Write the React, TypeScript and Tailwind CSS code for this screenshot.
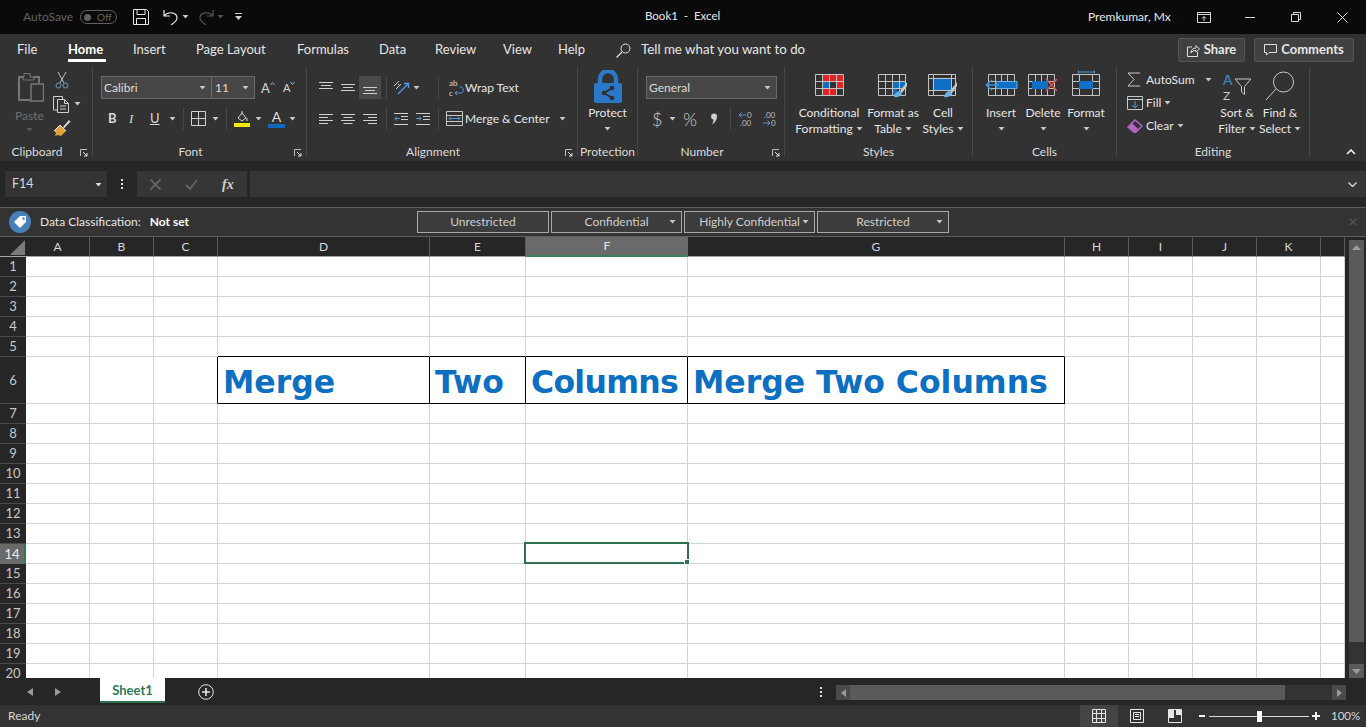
import type { ReactNode } from 'react';

const COLS = ['A', 'B', 'C', 'D', 'E', 'F', 'G', 'H', 'I', 'J', 'K', ''];
const ROWS = Array.from({ length: 20 }, (_, i) => i + 1);

const TABS = [
  { label: 'File', w: 'w-[51px]' },
  { label: 'Home', w: 'w-[65px]', active: true },
  { label: 'Insert', w: 'w-[63px]' },
  { label: 'Page Layout', w: 'w-[101px]' },
  { label: 'Formulas', w: 'w-[82px]' },
  { label: 'Data', w: 'w-[56px]' },
  { label: 'Review', w: 'w-[68px]' },
  { label: 'View', w: 'w-[55px]' },
  { label: 'Help', w: 'w-[58px]' },
];

function Caret({ className = 'text-[#c8c8c8]' }: { className?: string }) {
  return (
    <svg width="7" height="4" viewBox="0 0 7 4" className={className}>
      <polygon points="0.5,0 6.5,0 3.5,3.500" fill="currentColor" />
    </svg>
  );
}

function Launcher() {
  return (
    <svg width="8" height="8" viewBox="0 0 8 8" fill="none">
      <path d="M0.5 7V0.5H7" stroke="#bdbdbd" />
      <path d="M3 3l4 4M7 4v3H4" stroke="#e0e0e0" />
    </svg>
  );
}

function Group({ w, label, launcher, children }: { w: string; label: string; launcher?: boolean; children: ReactNode }) {
  return (
    <div className={`flex h-full shrink-0 ${w}`}>
      <div className="flex min-w-0 flex-1 flex-col">
        <div className="min-h-0 flex-1">{children}</div>
        <div className="flex h-[18px] items-start">
          <span className="flex-1 text-center text-[12px] leading-[18px] text-[#dcdcdc]">{label}</span>
          {launcher && (
            <span className="flex w-[18px] pt-[6px] pl-[6px]">
              <Launcher />
            </span>
          )}
        </div>
      </div>
      <div className="my-[5px] w-px bg-[#474747]" />
    </div>
  );
}

function BigButton({ w, icon, lines, caretLine }: { w: string; icon: ReactNode; lines: string[]; caretLine?: boolean }) {
  return (
    <div className={`flex shrink-0 flex-col items-center ${w}`}>
      <div className="flex h-[43px] items-start justify-center pt-[12px]">{icon}</div>
      {lines.map((l, i) => (
        <div key={l} className="flex h-[16px] items-center gap-[3px] text-[12px] leading-4 whitespace-nowrap text-[#e6e6e6]">
          {l}
          {caretLine && i === lines.length - 1 && <Caret />}
        </div>
      ))}
      {!caretLine && (
        <div className="flex h-[16px] items-center">
          <Caret />
        </div>
      )}
    </div>
  );
}

function Sep() {
  return <div className="h-[22px] w-px shrink-0 bg-[#474747]" />;
}

function Lines({ d }: { d: string }) {
  return (
    <svg width="14" height="14" viewBox="0 0 14 14" fill="none">
      <path d={d} stroke="#d0d0d0" />
    </svg>
  );
}

function Grid3({ children, w = 29, h = 22 }: { children?: ReactNode; w?: number; h?: number }) {
  return (
    <svg width={w} height={h} viewBox="0 0 29 22" fill="none">
      {children}
      <path d="M.5.5h28v21H.5zM.5 7.5h28M.5 14.5h28M7.5.5v21M14.5.5v21M21.5.5v21" stroke="#c4c4c4" />
    </svg>
  );
}

function Clipboard() {
  return (
    <Group w="w-[93px]" label="Clipboard" launcher>
      <div className="flex pt-[10px] pl-[15px]">
        <div className="flex w-[38px] flex-col items-start">
          <svg width="29" height="31" viewBox="0 0 29 31" fill="none">
            <path d="M9 5H4v23h11M19 5h5v6" stroke="#777" strokeWidth="2" />
            <path d="M9 5V1.5h6V5h4v3H8V5z" stroke="#777" />
            <rect x="16" y="12" width="12.5" height="17" stroke="#777" strokeWidth="1.5" />
          </svg>
          <div className="mt-[5px] text-[12px] leading-4 text-[#6f6f6f]">Paste</div>
          <div className="mt-[4px] ml-[11px]">
            <Caret className="text-[#5a5a5a]" />
          </div>
        </div>
        <div className="flex flex-col">
          <svg width="14" height="17" viewBox="0 0 14 17" fill="none" className="ml-[2px]">
            <path d="M3 0l6 11M11 0L5 11" stroke="#bdbdbd" />
            <circle cx="3.5" cy="13.5" r="2.5" stroke="#6d9dc2" />
            <circle cx="10.5" cy="13.5" r="2.5" stroke="#6d9dc2" />
          </svg>
          <div className="mt-[6px] flex items-center gap-[4px]">
            <svg width="17" height="18" viewBox="0 0 17 18" fill="none">
              <path d="M4 15H.5V1.5h9V4" stroke="#d0d0d0" />
              <path d="M4.5 4.5h7l4 4v9h-11zM11.500 4.500v4h4M7 11h6M7 14h6" stroke="#d0d0d0" />
            </svg>
            <Caret />
          </div>
          <svg width="18" height="18" viewBox="0 0 18 18" fill="none" className="mt-[6px]">
            <path d="M1 12l6-6 6 6-5 5-3-1-3 1 1-3z" fill="#e2a33f" />
            <path d="M1 12l6-6 6 6" stroke="#e8e8e8" />
            <path d="M10 8l6-7 1.5 1.5-6.5 7z" fill="#d8d8d8" />
          </svg>
        </div>
      </div>
    </Group>
  );
}

function Font() {
  return (
    <Group w="w-[214px]" label="Font" launcher>
      <div className="mt-[14px] ml-[8px] flex h-[23px] items-center">
        <div className="flex h-full w-[111px] items-center justify-between border border-[#6a6a6a] bg-[#464646] pr-[5px] pl-[2px] text-[12px] text-[#dcdcdc]">
          Calibri
          <Caret />
        </div>
        <div className="flex h-full w-[43px] items-center justify-between border border-l-0 border-[#6a6a6a] bg-[#464646] pr-[5px] pl-[3px] text-[12px] text-[#dcdcdc]">
          11
          <Caret />
        </div>
        <div className="ml-[6px] flex w-[22px] items-start text-[13px] leading-4 text-[#d8d8d8]">
          A
          <svg width="5" height="3" viewBox="0 0 5 3" className="mt-[2px]">
            <path d="M.5 3L2.5.5 4.5 3" stroke="#7fb2dd" fill="none" />
          </svg>
        </div>
        <div className="flex w-[16px] items-start text-[11px] leading-4 text-[#d8d8d8]">
          A
          <svg width="5" height="3" viewBox="0 0 5 3" className="mt-[2px]">
            <path d="M.5 0L2.5 2.5 4.5 0" stroke="#7fb2dd" fill="none" />
          </svg>
        </div>
      </div>
      <div className="mt-[8px] ml-[15px] flex h-[23px] items-center text-[#d8d8d8]">
        <span className="w-[21px] text-[13px] font-bold">B</span>
        <span className="w-[21px] text-[13px] italic [font-family:'Liberation_Serif',serif]">I</span>
        <span className="w-[19px] text-[13px] underline">U</span>
        <Caret />
        <span className="ml-[7px]">
          <Sep />
        </span>
        <svg width="15" height="15" viewBox="0 0 15 15" fill="none" className="ml-[7px]">
          <path d="M.5.5h14v14H.5zM7.5.5v14M.5 7.5h14" stroke="#d0d0d0" />
        </svg>
        <span className="ml-[6px]">
          <Caret />
        </span>
        <span className="ml-[7px]">
          <Sep />
        </span>
        <svg width="17" height="17" viewBox="0 0 17 17" fill="none" className="ml-[7px]">
          <path d="M4 8l4-5 4 5-4 3z" stroke="#d8d8d8" />
          <path d="M8 3V1M13 8v3" stroke="#d8d8d8" />
          <rect y="13" width="16" height="4" fill="#f2ea00" />
        </svg>
        <span className="ml-[4px]">
          <Caret />
        </span>
        <span className="ml-[6px] flex w-[17px] flex-col items-center">
          <span className="text-[14px] leading-[13px] text-[#dcdcdc]">A</span>
          <span className="mt-[1px] h-[4px] w-full bg-[#1068bf]" />
        </span>
        <span className="ml-[4px]">
          <Caret />
        </span>
      </div>
    </Group>
  );
}

function Alignment() {
  return (
    <Group w="w-[271px]" label="Alignment" launcher>
      <div className="mt-[14px] ml-[8px] flex h-[23px] items-center">
        <span className="flex h-[23px] w-[22px] items-center justify-center">
          <Lines d="M0 1.5h14M2 4.5h10M0 7.5h14" />
        </span>
        <span className="flex h-[23px] w-[22px] items-center justify-center">
          <Lines d="M0 3.5h14M2 6.5h10M0 9.5h14" />
        </span>
        <span className="flex h-[23px] w-[22px] items-center justify-center bg-[#4a4a4a]">
          <Lines d="M0 6.5h14M2 9.5h10M0 12.5h14" />
        </span>
        <span className="ml-[5px]">
          <Sep />
        </span>
        <svg width="18" height="16" viewBox="0 0 18 16" fill="none" className="ml-[6px]">
          <path d="M5 14L15 4M11 3.5h4.5V8" stroke="#4f9bd9" strokeWidth="1.3" />
          <path d="M1 6l5-5M3 9l5-5M5 4l2 2" stroke="#d0d0d0" />
        </svg>
        <span className="ml-[2px]">
          <Caret />
        </span>
        <span className="ml-[18px]">
          <Sep />
        </span>
        <svg width="17" height="19" viewBox="0 0 17 19" fill="none" className="ml-[9px]">
          <text x="1" y="8" fontSize="8" fill="#d8d8d8">ab</text>
          <text x="1" y="17.700" fontSize="8" fill="#d8d8d8">c</text>
          <path d="M7 15h6c3 0 3-6 0-6h-1M7 15l2-2M7 15l2 2" stroke="#4f9bd9" />
        </svg>
        <span className="text-[12px] text-[#e6e6e6]">Wrap Text</span>
      </div>
      <div className="mt-[8px] ml-[8px] flex h-[23px] items-center">
        <span className="flex h-[23px] w-[22px] items-center justify-center">
          <Lines d="M0 2.5h14M0 5.5h9M0 8.5h14M0 11.5h9" />
        </span>
        <span className="flex h-[23px] w-[22px] items-center justify-center">
          <Lines d="M0 2.5h14M2.5 5.5h9M0 8.5h14M2.5 11.5h9" />
        </span>
        <span className="flex h-[23px] w-[22px] items-center justify-center">
          <Lines d="M0 2.5h14M5 5.5h9M0 8.5h14M5 11.5h9" />
        </span>
        <span className="ml-[5px]">
          <Sep />
        </span>
        <svg width="14" height="12" viewBox="0 0 14 12" fill="none" className="ml-[7px]">
          <path d="M0 .5h14M7 3.5h7M7 6.5h7M0 11.5h14" stroke="#d0d0d0" />
          <path d="M1 5.5h5M1 5.5l2-2M1 5.5l2 2" stroke="#4f9bd9" />
        </svg>
        <svg width="14" height="12" viewBox="0 0 14 12" fill="none" className="ml-[8px]">
          <path d="M0 .5h14M7 3.5h7M7 6.5h7M0 11.5h14" stroke="#d0d0d0" />
          <path d="M0 5.5h5M5 5.5l-2-2M5 5.5l-2 2" stroke="#4f9bd9" />
        </svg>
        <span className="ml-[8px]">
          <Sep />
        </span>
        <svg width="17" height="15" viewBox="0 0 17 15" fill="none" className="ml-[7px]">
          <path d="M.5.5h16v14H.5zM.5 4.5h16M.5 10.5h16" stroke="#c4c4c4" />
          <path d="M3 7.5h11M3 7.5l2-2M3 7.5l2 2M14 7.5l-2-2M14 7.5l-2 2" stroke="#4f9bd9" />
        </svg>
        <span className="ml-[2px] w-[94px] text-[12px] whitespace-nowrap text-[#e6e6e6]">Merge &amp; Center</span>
        <Caret />
      </div>
    </Group>
  );
}

function Protection() {
  return (
    <Group w="w-[60px]" label="Protection">
      <div className="flex flex-col items-center pt-[8px]">
        <svg width="28" height="33" viewBox="0 0 28 33" fill="none">
          <path d="M6 15V9a8 8 0 0116 0v6" stroke="#2a78c8" strokeWidth="4.5" />
          <rect y="13" width="28" height="20" rx="2" fill="#2a78c8" />
          <path d="M18 18l-8 5 8 5" stroke="#2d2d2d" strokeWidth="1.8" />
          <circle cx="18" cy="18" r="2.3" fill="#2d2d2d" />
          <circle cx="10" cy="23" r="2.3" fill="#2d2d2d" />
          <circle cx="18" cy="28" r="2.3" fill="#2d2d2d" />
        </svg>
        <div className="mt-[2px] text-[12px] leading-4 text-[#e6e6e6]">Protect</div>
        <div className="flex h-[16px] items-center">
          <Caret />
        </div>
      </div>
    </Group>
  );
}

function NumberGroup() {
  return (
    <Group w="w-[147px]" label="Number" launcher>
      <div className="mt-[14px] ml-[8px] flex h-[23px] w-[131px] items-center justify-between border border-[#6a6a6a] bg-[#464646] pr-[5px] pl-[2px] text-[12px] text-[#dcdcdc]">
        General
        <Caret />
      </div>
      <div className="mt-[8px] ml-[14px] flex h-[23px] items-center text-[#d0d0d0]">
        <span className="w-[17px] text-[18px] leading-5 font-light">$</span>
        <Caret />
        <span className="ml-[7px] w-[27px] text-[18px] leading-5 font-light">%</span>
        <svg width="8" height="12" viewBox="0 0 8 12">
          <path d="M1 3.5a3 3 0 116 0c0 3.5-2 6-5 8 1-2 1.500-3.500 1.500-5A3 3 0 011 3.500z" fill="#d0d0d0" />
        </svg>
        <span className="ml-[12px]">
          <Sep />
        </span>
        <svg width="15" height="16" viewBox="0 0 15 16" className="ml-[7px]">
          <path d="M1 4h7M1 4l2.500-2.500M1 4l2.500 2.500" stroke="#4f9bd9" fill="none" />
          <text x="9" y="7" fontSize="8" fill="#bdbdbd">0</text>
          <text x="2" y="15" fontSize="8" fill="#bdbdbd">.00</text>
        </svg>
        <svg width="15" height="16" viewBox="0 0 15 16" className="ml-[9px]">
          <text x="2" y="7" fontSize="8" fill="#bdbdbd">.00</text>
          <path d="M1 12h7M8 12l-2.500-2.500M8 12l-2.500 2.500" stroke="#4f9bd9" fill="none" />
          <text x="9" y="15" fontSize="8" fill="#bdbdbd">0</text>
        </svg>
      </div>
    </Group>
  );
}

function Styles() {
  return (
    <Group w="w-[188px]" label="Styles">
      <div className="flex pl-[5px]">
        <BigButton
          w="w-[78px]"
          lines={['Conditional', 'Formatting']}
          caretLine
          icon={
            <Grid3>
              <path d="M7 0h22v7H7zM7 15h15v7H7zM21 7h8v8h-8z" fill="#e2231f" />
              <path d="M7 7h7v8H7z" fill="#0f6fc6" />
            </Grid3>
          }
        />
        <BigButton
          w="w-[50px]"
          lines={['Format as', 'Table']}
          caretLine
          icon={
            <svg width="30" height="24" viewBox="0 0 30 24" fill="none">
              <path d="M14 7h14v8H14zM14 15h5v7h-5z" fill="#0f6fc6" />
              <path d="M.5.500h27v21H.500zM.5 7.500h27M.5 14.500h27M7.500.5v21M14.500.5v21M21.500.5v21" stroke="#c4c4c4" />
              <path d="M29 8L22 17l2 2 5-7z" fill="#c8c8c8" />
              <path d="M16 23c1-5 4-6 6-6l2 2c0 2-3 5-8 4z" fill="#6aaee6" />
            </svg>
          }
        />
        <BigButton
          w="w-[50px]"
          lines={['Cell', 'Styles']}
          caretLine
          icon={
            <svg width="30" height="24" viewBox="0 0 30 24" fill="none">
              <path d="M5 4h19v12H5z" fill="#0f6fc6" />
              <path d="M.5.500h27v21H.500zM.5 4.500h27M5.500.5v21M23.500.5v21M.5 16.500h27" stroke="#c4c4c4" />
              <path d="M29 8L22 17l2 2 5-7z" fill="#c8c8c8" />
              <path d="M16 23c1-5 4-6 6-6l2 2c0 2-3 5-8 4z" fill="#6aaee6" />
            </svg>
          }
        />
      </div>
    </Group>
  );
}

function Cells() {
  return (
    <Group w="w-[144px]" label="Cells">
      <div className="flex pl-[7px]">
        <BigButton
          w="w-[42px]"
          lines={['Insert']}
          icon={
            <svg width="33" height="22" viewBox="0 0 33 22" fill="none">
              <path d="M3.500.5h26v21h-26zM3.500 7.500h26M3.500 14.500h26M10.500.5v21M16.500.5v21M22.500.5v21" stroke="#c4c4c4" />
              <path d="M11 7h21v8H11z" fill="#0f6fc6" />
              <path d="M11 7.500h21v7H11z" stroke="#6aaee6" />
              <path d="M1 11h13M1 11l6-5M1 11l6 5" stroke="#3d8fd6" strokeWidth="1.500" />
            </svg>
          }
        />
        <BigButton
          w="w-[42px]"
          lines={['Delete']}
          icon={
            <svg width="30" height="22" viewBox="0 0 30 22" fill="none">
              <path d="M.5.5h26v21H.5zM.5 7.500h26M.5 14.500h26M7.500.5v21M13.500.5v21M19.500.5v21" stroke="#c4c4c4" />
              <path d="M4 7h16v8H4z" fill="#0f6fc6" />
              <path d="M18 5l11 12M29 5L18 17" stroke="#d9534f" strokeWidth="1.500" />
            </svg>
          }
        />
        <BigButton
          w="w-[44px]"
          lines={['Format']}
          icon={
            <svg width="28" height="26" viewBox="0 0 28 26" fill="none" className="-mt-[4px]">
              <path d="M6.500.5v3M22.500.5v3M6.500 2h16" stroke="#4f9bd9" />
              <path d="M.5 4.500h27v21H.5zM.5 11.500h27M.5 18.500h27M7.500 4.500v21M20.500 4.500v21" stroke="#c4c4c4" />
              <path d="M7 11h14v8H7z" fill="#0f6fc6" />
            </svg>
          }
        />
      </div>
    </Group>
  );
}

function Editing() {
  return (
    <Group w="w-[193px]" label="Editing">
      <div className="flex">
        <div className="flex w-[98px] flex-col pt-[6px] pl-[10px] text-[12px] text-[#e6e6e6]">
          <div className="flex h-[23px] items-center">
            <svg width="14" height="15" viewBox="0 0 14 15" fill="none" className="mr-[5px] ml-[0px] shrink-0">
              <path d="M13 1H1l6 6.500L1 14h12" stroke="#c8c8c8" />
            </svg>
            <span className="w-[59px]">AutoSum</span>
            <Caret />
          </div>
          <div className="flex h-[23px] items-center">
            <svg width="16" height="14" viewBox="0 0 16 14" fill="none" className="mr-[3px] shrink-0">
              <path d="M.5.500h15v13H.5zM.5 3.500h15" stroke="#c8c8c8" />
              <path d="M8 5v7M8 12l-3-3M8 12l3-3" stroke="#4f9bd9" />
            </svg>
            <span className="mr-[3px]">Fill</span>
            <Caret />
          </div>
          <div className="flex h-[23px] items-center">
            <svg width="17" height="14" viewBox="0 0 17 14" fill="none" className="mr-[2px] shrink-0">
              <path d="M1 8l7-7 7 6-7 7z" stroke="#b366c2" strokeWidth="1.500" />
              <path d="M1 8l4-4 6 6-3 3.500z" fill="#b366c2" />
            </svg>
            <span className="mr-[3px]">Clear</span>
            <Caret />
          </div>
        </div>
        <BigButton
          w="w-[44px]"
          lines={['Sort &', 'Filter']}
          caretLine
          icon={
            <svg width="30" height="33" viewBox="0 0 30 33" className="-mt-[4px] -mb-[4px]" fill="none">
              <text x="1" y="15" fontSize="14" fill="#3d8fd6">A</text>
              <text x="1" y="30" fontSize="12" fill="#c8c8c8">Z</text>
              <path d="M13 9h16l-6.500 7.500v8l-3-2.500v-5.500z" stroke="#c8c8c8" />
            </svg>
          }
        />
        <BigButton
          w="w-[42px]"
          lines={['Find &', 'Select']}
          caretLine
          icon={
            <svg width="30" height="30" viewBox="0 0 30 30" className="-mt-[3px]" fill="none">
              <circle cx="18.500" cy="11" r="10" stroke="#c8c8c8" />
              <path d="M11 18L1 29" stroke="#c8c8c8" />
            </svg>
          }
        />
      </div>
    </Group>
  );
}

function TitleBar() {
  return (
    <div className="flex h-[34px] items-center bg-[#0a0a0a] text-[12px]">
      <div className="flex w-[645px] items-center pl-[23px]">
        <span className="w-[50px] text-[#616161]">AutoSave</span>
        <div className="ml-[7px] flex h-[14px] w-[37px] items-center rounded-full border border-[#616161] pl-[3px] text-[10px] text-[#616161]">
          <span className="h-[7px] w-[7px] rounded-full bg-[#616161]" />
          <span className="ml-[6px]">Off</span>
        </div>
        <svg width="16" height="16" viewBox="0 0 16 16" fill="none" className="ml-[16px]">
          <path d="M.5.500h13l2 2v13H.5zM4 .5v5h8v-5M3.500 15.500v-6h9v6" stroke="#e6e6e6" />
        </svg>
        <svg width="16" height="16" viewBox="0 0 16 16" fill="none" className="ml-[14px]">
          <path d="M1 1v6h6M1 7c4-5 13-4 13 2 0 3-3 5-6 7" stroke="#e6e6e6" strokeWidth="1.200" />
        </svg>
        <span className="ml-[3px]">
          <Caret className="text-[#c8c8c8]" />
        </span>
        <svg width="16" height="16" viewBox="0 0 16 16" fill="none" className="ml-[9px]">
          <path d="M15 1v6H9M15 7C11 2 2 3 2 9c0 3 3 5 6 7" stroke="#555" strokeWidth="1.200" />
        </svg>
        <span className="ml-[3px]">
          <Caret className="text-[#555]" />
        </span>
        <svg width="7" height="8" viewBox="0 0 7 8" className="ml-[11px]">
          <path d="M0 .5h7" stroke="#d0d0d0" />
          <polygon points="0,3 7,3 3.500,7" fill="#d0d0d0" />
        </svg>
      </div>
      <div className="w-[443px] pb-[2px] text-[11.500px] whitespace-pre text-[#e6e6e6]">Book1  -  Excel</div>
      <div className="w-[109px] text-[#e6e6e6]">Premkumar, Mx</div>
      <svg width="14" height="11" viewBox="0 0 14 11" fill="none">
        <path d="M.5.500h13v10H.5zM.5 2.500h13M7 9V4.500M5 6.500l2-2 2 2" stroke="#d8d8d8" />
      </svg>
      <div className="ml-[34px] h-px w-[10px] bg-[#d8d8d8]" />
      <svg width="10" height="10" viewBox="0 0 10 10" fill="none" className="ml-[36px]">
        <path d="M.5 2.500h7v7h-7zM2.500 2.500v-2h7v7h-2" stroke="#d8d8d8" />
      </svg>
      <svg width="11" height="11" viewBox="0 0 11 11" fill="none" className="ml-[36px]">
        <path d="M.5.500l10 10M10.500.500l-10 10" stroke="#d8d8d8" />
      </svg>
    </div>
  );
}

function TabRow() {
  return (
    <div className="flex h-[28px] items-stretch pl-[17px] text-[13px] text-[#e6e6e6]">
      {TABS.map((t) => (
        <div key={t.label} className={`flex ${t.w}`}>
          {t.active ? (
            <span className="flex w-[38px] items-center border-b-[3px] border-white pt-[7px] font-bold text-white">{t.label}</span>
          ) : (
            <span className="flex items-center pt-[4px]">{t.label}</span>
          )}
        </div>
      ))}
      <svg width="15" height="15" viewBox="0 0 15 15" fill="none" className="mt-[4px] self-center">
        <circle cx="9.500" cy="5.500" r="4.500" stroke="#e0e0e0" />
        <path d="M6 9l-5.500 5.500" stroke="#e0e0e0" strokeWidth="1.300" />
      </svg>
      <span className="ml-[10px] flex w-[537px] items-center pt-[4px] text-[13.300px]">Tell me what you want to do</span>
      <div className="flex h-[24px] w-[67px] items-center justify-center gap-[4px] self-end rounded-[2px] border border-[#555] bg-[#414141] font-bold">
        <svg width="13" height="13" viewBox="0 0 13 13" fill="none">
          <path d="M5 3H.5v9.500h10V8M4 9c0-3 2-5 5-5V1.500l3.500 3.500L9 8V6.500C7 6.500 5 7 4 9z" stroke="#e0e0e0" />
        </svg>
        Share
      </div>
      <div className="ml-[9px] flex h-[24px] w-[100px] items-center justify-center gap-[4px] self-end rounded-[2px] border border-[#555] bg-[#414141] font-bold">
        <svg width="13" height="12" viewBox="0 0 13 12" fill="none">
          <path d="M.5.500h12v8H5L2.500 11V8.500h-2z" stroke="#e0e0e0" />
        </svg>
        Comments
      </div>
    </div>
  );
}

function FormulaBar() {
  return (
    <div className="flex h-[26px] items-stretch pl-[5px]">
      <div className="flex w-[102px] items-center justify-between bg-[#333333] pt-px pr-[5px] pl-[7px] text-[12.500px] text-[#d8d8d8]">
        F14
        <Caret className="text-[#e0e0e0]" />
      </div>
      <div className="flex w-[30px] flex-col items-center justify-center gap-[2px]">
        <span className="h-[2px] w-[2px] bg-[#e0e0e0]" />
        <span className="h-[2px] w-[2px] bg-[#e0e0e0]" />
        <span className="h-[2px] w-[2px] bg-[#e0e0e0]" />
      </div>
      <div className="flex w-[110px] items-center bg-[#363636]">
        <svg width="11" height="11" viewBox="0 0 11 11" fill="none" className="ml-[13px]">
          <path d="M.5.500l10 10M10.500.500l-10 10" stroke="#666" strokeWidth="1.800" />
        </svg>
        <svg width="13" height="11" viewBox="0 0 13 11" fill="none" className="ml-[24px]">
          <path d="M1 6l4 4 7-9" stroke="#666" strokeWidth="1.800" />
        </svg>
        <span className="ml-[24px] text-[14px] font-bold text-[#d0d0d0] italic [font-family:'Liberation_Serif',serif]">fx</span>
      </div>
      <div className="ml-[3px] flex flex-1 items-center justify-end bg-[#363636] pr-[9px]">
        <svg width="9" height="5" viewBox="0 0 9 5" fill="none">
          <path d="M.5.500l4 4 4-4" stroke="#e0e0e0" strokeWidth="1.200" />
        </svg>
      </div>
    </div>
  );
}

function ClassButton({ w, label, caret }: { w: string; label: string; caret?: boolean }) {
  return (
    <div className={`relative flex h-[22px] items-center justify-center border border-[#a8a8a8] bg-[#3c3c3c] text-[12px] text-[#cfcfcf] ${w}`}>
      {label}
      {caret && (
        <span className="absolute top-[8px] right-[5px]">
          <Caret />
        </span>
      )}
    </div>
  );
}

function ClassificationBar() {
  return (
    <div className="flex h-[30px] items-center border-y border-[#5e5e5e] bg-[#333333] text-[12px]">
      <div className="flex w-[417px] items-center pl-[9px]">
        <svg width="22" height="22" viewBox="0 0 22 22">
          <circle cx="11" cy="11" r="11" fill="#4a80b8" />
          <path d="M5 11l6-6h6v6l-6 6z" fill="#fff" />
          <circle cx="14.500" cy="7.500" r="1.200" fill="#4a80b8" />
        </svg>
        <span className="ml-[9px] text-[#e6e6e6]">Data Classification:</span>
        <span className="ml-[9px] font-bold text-white">Not set</span>
      </div>
      <div className="flex gap-[2px]">
        <ClassButton w="w-[132px]" label="Unrestricted" />
        <ClassButton w="w-[131px]" label="Confidential" caret />
        <ClassButton w="w-[131px]" label="Highly Confidential" caret />
        <ClassButton w="w-[132px]" label="Restricted" caret />
      </div>
      <svg width="8" height="8" viewBox="0 0 8 8" fill="none" className="ml-[400px]">
        <path d="M.5.500l7 7M7.500.500l-7 7" stroke="#555" strokeWidth="1.300" />
      </svg>
    </div>
  );
}

function cellClass(row: number, col: number) {
  const rightBlack = row === 6 && col >= 2 && col <= 6;
  const bottomBlack = (row === 5 || row === 6) && col >= 3 && col <= 6;
  return `border-r border-b bg-white ${rightBlack ? 'border-r-black' : 'border-r-[#d4d4d4]'} ${bottomBlack ? 'border-b-black' : 'border-b-[#d4d4d4]'}`;
}

const BOLD_TEXT = "pt-[3px] pl-[5px] text-[31.500px] leading-[44px] font-bold whitespace-nowrap text-[#0b6fc2] [font-family:'DejaVu_Sans',sans-serif]";

function Sheet() {
  const textOf: Record<string, string> = { 3: 'Merge', 4: 'Two', 5: 'Columns', 6: 'Merge Two Columns' };
  return (
    <div className="flex h-[441px]">
      <div className="grid h-[441px] w-[1345px] grid-cols-[26px_64px_64px_64px_212px_96px_162px_377px_64px_64px_64px_64px_24px] grid-rows-[20px_repeat(5,20px)_47px_repeat(14,20px)] overflow-hidden">
        <div className="flex items-end justify-end border-b border-[#a6a6a6] bg-[#262626] pr-[1px] pb-[1px]">
          <svg width="15" height="15" viewBox="0 0 15 15">
            <polygon points="15,0 15,15 0,15" fill="#7a7a7a" />
          </svg>
        </div>
        {COLS.map((c) =>
          c === 'F' ? (
            <div key="F" className="flex items-center justify-center border-b-2 border-b-[#3c7f5c] bg-[#6a6a6a] text-[12px] text-[#e6e6e6]">
              {c}
            </div>
          ) : (
            <div key={c || 'L'} className="flex items-center justify-center border-r border-b border-r-[#5a5a5a] border-b-[#a6a6a6] bg-[#262626] text-[12px] text-[#d8d8d8]">
              {c}
            </div>
          ),
        )}
        {ROWS.map((r) => [
          r === 14 ? (
            <div key={`h${r}`} className="flex items-center justify-center border-r-2 border-r-[#2f7a55] bg-[#6a6a6a] pt-px text-[13px] text-[#f0f0f0]">
              {r}
            </div>
          ) : (
            <div key={`h${r}`} className="flex items-center justify-center border-b border-b-[#4a4a4a] bg-[#262626] pt-px text-[13px] text-[#c8c8c8]">
              {r}
            </div>
          ),
          ...COLS.map((_, i) =>
            r === 14 && i === 5 ? (
              <div key={`${r}-${i}`} className={`relative z-10 ${cellClass(r, i)}`}>
                <div className="absolute -top-[2px] -right-[2px] -bottom-[1px] -left-[2px] border-2 border-[#2f6f52]">
                  <span className="absolute -right-[3px] -bottom-[3px] h-[6px] w-[6px] border border-white bg-[#2f6f52]" />
                </div>
              </div>
            ) : (
              <div key={`${r}-${i}`} className={cellClass(r, i)}>
                {r === 6 && textOf[i] && (
                  <div className={i === 5 ? `${BOLD_TEXT} tracking-[-0.7px]` : BOLD_TEXT}>{textOf[i]}</div>
                )}
              </div>
            ),
          ),
        ])}
      </div>
      <div className="flex w-[21px] flex-col items-center bg-[#262626] pt-[3px] pl-[1px]">
        <div className="flex h-[15px] w-[15px] items-center justify-center bg-[#5a5a5a]">
          <svg width="9" height="5" viewBox="0 0 9 5">
            <polygon points="0,5 9,5 4.500,0" fill="#9a9a9a" />
          </svg>
        </div>
        <div className="h-[387px] w-[15px] bg-[#5a5a5a]" />
        <div className="h-[22px] w-[15px] bg-[#333333]" />
        <div className="flex h-[14px] w-[15px] items-center justify-center bg-[#5a5a5a]">
          <svg width="9" height="5" viewBox="0 0 9 5">
            <polygon points="0,0 9,0 4.500,5" fill="#9a9a9a" />
          </svg>
        </div>
      </div>
    </div>
  );
}

function SheetBar() {
  return (
    <div className="flex h-[27px] items-start bg-[#262626]">
      <svg width="6" height="8" viewBox="0 0 6 8" className="mt-[10px] ml-[27px]">
        <polygon points="6,0 6,8 0,4" fill="#999" />
      </svg>
      <svg width="6" height="8" viewBox="0 0 6 8" className="mt-[10px] ml-[22px]">
        <polygon points="0,0 0,8 6,4" fill="#999" />
      </svg>
      <div className="ml-[39px] flex h-[25px] w-[65px] items-center justify-center border-b-2 border-[#2f6f52] bg-white pt-[3px] text-[13px] font-bold text-[#2f7a55]">
        Sheet1
      </div>
      <svg width="16" height="16" viewBox="0 0 16 16" fill="none" className="mt-[6px] ml-[33px]">
        <circle cx="8" cy="8" r="7.300" stroke="#e6e6e6" />
        <path d="M8 4v8M4 8h8" stroke="#e6e6e6" strokeWidth="1.600" />
      </svg>
      <div className="mt-[9px] ml-[606px] flex h-[10px] w-[2px] flex-col justify-between">
        <span className="h-[2px] w-[2px] bg-[#e0e0e0]" />
        <span className="h-[2px] w-[2px] bg-[#e0e0e0]" />
        <span className="h-[2px] w-[2px] bg-[#e0e0e0]" />
      </div>
      <div className="mt-[7px] ml-[14px] flex h-[15px] w-[510px] bg-[#333333]">
        <div className="flex w-[14px] items-center justify-center bg-[#4a4a4a]">
          <svg width="5" height="8" viewBox="0 0 5 8">
            <polygon points="5,0 5,8 0,4" fill="#999" />
          </svg>
        </div>
        <div className="w-[435px] bg-[#5a5a5a]" />
        <div className="flex-1" />
        <div className="flex w-[14px] items-center justify-center bg-[#4a4a4a]">
          <svg width="5" height="8" viewBox="0 0 5 8">
            <polygon points="0,0 0,8 5,4" fill="#999" />
          </svg>
        </div>
      </div>
    </div>
  );
}

function StatusBar() {
  return (
    <div className="flex h-[22px] items-center bg-[#333333] text-[12px] text-[#d8d8d8]">
      <span className="w-[1080px] pl-[8px]">Ready</span>
      <div className="flex h-full w-[38px] items-center justify-center bg-[#444444]">
        <svg width="14" height="14" viewBox="0 0 14 14" fill="none">
          <path d="M.5.500h13v13H.5zM4.500.5v13M9.500.5v13M.5 4.500h13M.5 9.500h13" stroke="#e6e6e6" />
        </svg>
      </div>
      <svg width="14" height="14" viewBox="0 0 14 14" fill="none" className="ml-[12px]">
        <path d="M.5.500h13v13H.5zM3.500 3.500h7v7h-7zM5 5.500h4M5 7.500h4" stroke="#e6e6e6" />
      </svg>
      <svg width="14" height="14" viewBox="0 0 14 14" fill="none" className="ml-[24px]">
        <path d="M.5.500h13v13H.5z" stroke="#e6e6e6" />
        <path d="M1 1h5v8H1zM8 1h5v5H8z" fill="#e6e6e6" />
      </svg>
      <span className="ml-[17px] h-[2px] w-[6px] bg-[#f0f0f0]" />
      <div className="relative ml-[4px] h-px w-[100px] bg-[#d8d8d8]">
        <span className="absolute top-[-5px] left-[48px] h-[11px] w-[5px] bg-white" />
      </div>
      <svg width="8" height="8" viewBox="0 0 8 8" className="ml-[3px]">
        <path d="M4 0v8M0 4h8" stroke="#f0f0f0" strokeWidth="2" />
      </svg>
      <span className="ml-[11px] text-[11.500px]">100%</span>
    </div>
  );
}

export default function App() {
  return (
    <div className="h-[727px] w-[1366px] overflow-hidden bg-[#262626] [font-family:Lato,'Open_Sans',sans-serif]">
      <TitleBar />
      <div className="bg-[#323232]">
        <TabRow />
        <div className="flex h-[99px]">
          <Clipboard />
          <Font />
          <Alignment />
          <Protection />
          <NumberGroup />
          <Styles />
          <Cells />
          <Editing />
          <div className="flex flex-1 items-end justify-end pr-[10px] pb-[6px]">
            <svg width="10" height="6" viewBox="0 0 10 6" fill="none">
              <path d="M1 5l4-4 4 4" stroke="#f0f0f0" strokeWidth="1.600" />
            </svg>
          </div>
        </div>
      </div>
      <div className="h-[10px]" />
      <FormulaBar />
      <div className="h-[10px]" />
      <ClassificationBar />
      <Sheet />
      <SheetBar />
      <StatusBar />
    </div>
  );
}
